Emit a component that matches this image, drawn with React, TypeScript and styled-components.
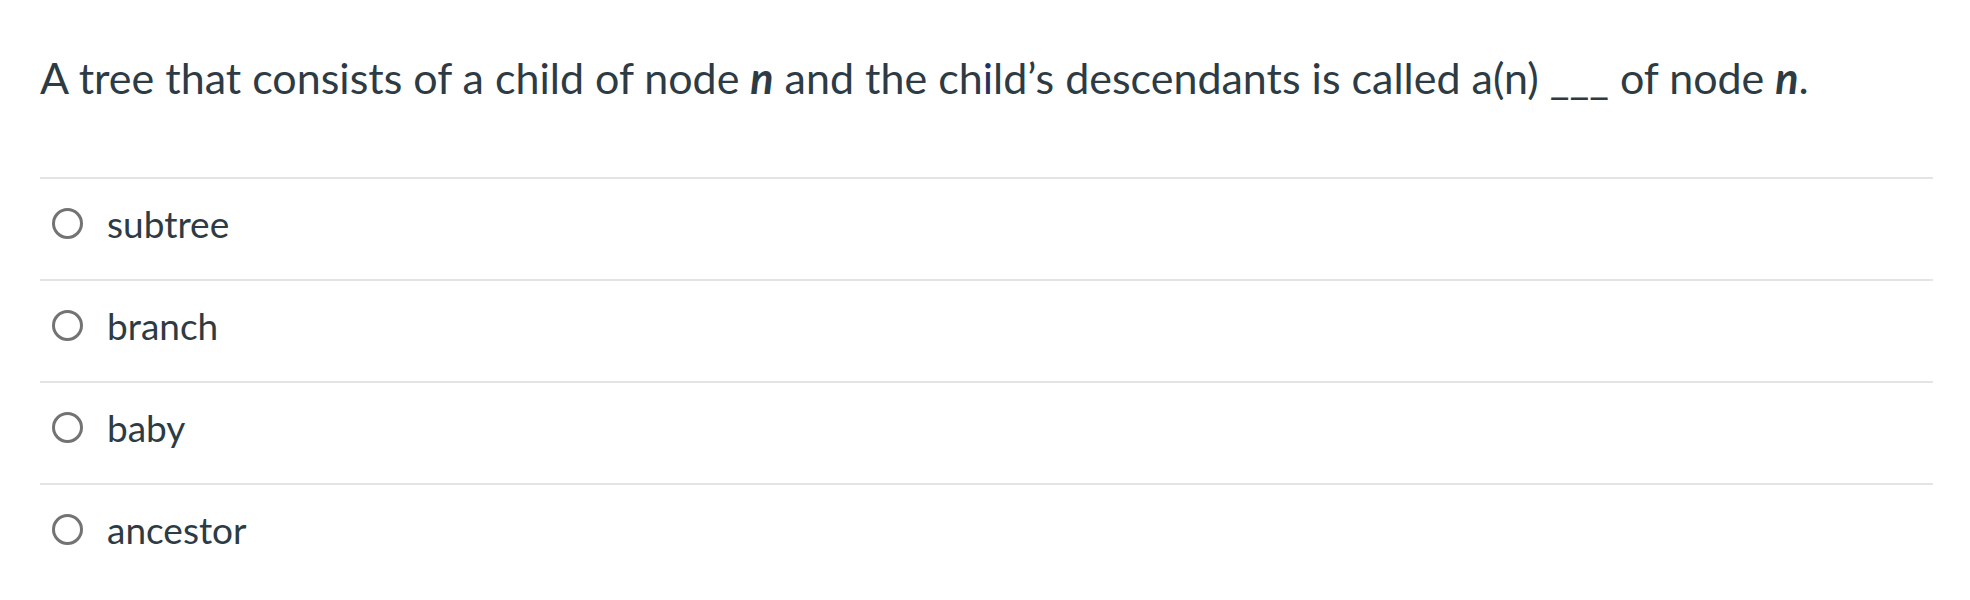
import React from "react";
import styled, { createGlobalStyle } from "styled-components";

const GlobalStyle = createGlobalStyle`
  html, body { margin: 0; padding: 0; background: #ffffff; }
  body { font-family: Lato, "Open Sans", sans-serif; color: #2d3b45; }
`;

const Page = styled.div`
  padding: 48px 37px 0 40px;
`;

const Question = styled.p`
  margin: 0;
  font-size: 43px;
  line-height: 60px;
  color: #2d3b45;
`;

const Var = styled.em`
  font-weight: 700;
  font-style: italic;
`;

const Cursor = styled.span`
  color: #243063;
`;

const Answers = styled.div`
  margin-top: 69px;
`;

const Answer = styled.label`
  display: flex;
  align-items: center;
  gap: 24px;
  height: 88px;
  padding: 0 0 12px 12px;
  border-top: 2px solid #e2e4e6;
  font-size: 37px;
  color: #2d3b45;
`;

const Radio = styled.span`
  box-sizing: border-box;
  width: 31px;
  height: 31px;
  border-radius: 50%;
  border: 3px solid #737373;
  flex: none;
`;

const options = ["subtree", "branch", "baby", "ancestor"];

export default function App() {
  return (
    <>
      <GlobalStyle />
      <Page>
        <Question>
          A tree that consists of a child of node <Var>n</Var> and the ch
          <Cursor>i</Cursor>ld’s descendants is called a(n) ___ of node{" "}
          <Var>n</Var>.
        </Question>
        <Answers>
          {options.map((o) => (
            <Answer key={o}>
              <Radio />
              <span>{o}</span>
            </Answer>
          ))}
        </Answers>
      </Page>
    </>
  );
}
